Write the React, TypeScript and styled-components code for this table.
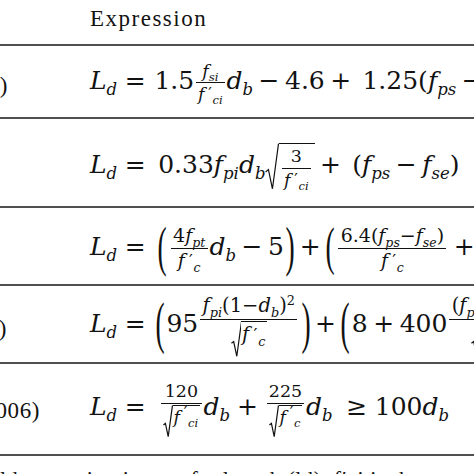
import styled, { createGlobalStyle } from 'styled-components'
import type { ReactNode } from 'react'

const GlobalStyle = createGlobalStyle`
  html, body { margin: 0; padding: 0; background: #fff; }
  body { overflow: hidden; }
`

const Page = styled.div`
  width: 474px;
  height: 474px;
  overflow: hidden;
  background: #fff;
  color: #121212;
  font-family: "Liberation Serif", "DejaVu Serif", serif;
`

const Table = styled.div`
  display: flex;
  flex-direction: column;
  width: 900px;
`

const Row = styled.div<{ $h: number }>`
  display: flex;
  flex: none;
  height: ${p => p.$h}px;
  box-sizing: border-box;
  border-bottom: 2px solid #505050;
`

const Source = styled.div<{ $end?: number; $dy?: number }>`
  width: 90px;
  flex: none;
  display: flex;
  justify-content: flex-end;
  align-items: center;
  overflow: hidden;
  white-space: nowrap;
  box-sizing: border-box;
  padding-right: ${p => 90 - (p.$end ?? 0)}px;
  padding-top: ${p => p.$dy ?? 0}px;
  font-size: 23px;
  letter-spacing: 0.6px;
`

const Head = styled.div`
  padding-top: 6px;
  font-size: 23px;
  letter-spacing: 1.5px;
`

const Expr = styled.div<{ $dy?: number }>`
  flex: 1;
  display: flex;
  align-items: center;
  padding-top: ${p => p.$dy ?? 0}px;
  font-family: "DejaVu Serif", serif;
  font-size: 25px;
  white-space: nowrap;
`

const Line = styled.span`
  display: inline-block;
  line-height: 1.2;
`

const It = styled.span`
  font-style: italic;
`

const Sub = styled.span`
  font-size: 0.66em;
  font-style: italic;
  vertical-align: -0.36em;
  line-height: 0;
`

const Sup = styled.span`
  font-size: 0.66em;
  font-style: normal;
  vertical-align: 0.55em;
  line-height: 0;
`

const PrimeMark = styled.span<{ $high?: boolean }>`
  font-style: normal;
  font-size: 0.9em;
  vertical-align: ${p => (p.$high ? 0.3 : 0.06)}em;
  line-height: 0;
  margin: 0 0.04em 0 0.24em;
`

const Op = styled.span<{ $l?: number; $r?: number }>`
  margin: 0 ${p => p.$r ?? 0.22}em 0 ${p => p.$l ?? 0.22}em;
  font-style: normal;
`

const FracBox = styled.span<{ $size: number }>`
  display: inline-flex;
  flex-direction: column;
  align-items: stretch;
  vertical-align: middle;
  font-size: ${p => p.$size}em;
  line-height: 1.15;
  margin: 0 0.1em;
`

const Num = styled.span`
  display: block;
  text-align: center;
  padding: 0 0.12em 0.06em;
  border-bottom: 1px solid currentColor;
`

const Den = styled.span`
  display: block;
  text-align: center;
  padding: 0.06em 0.12em 0;
`

const SqrtBox = styled.span`
  display: inline-flex;
  align-items: stretch;
  vertical-align: middle;
`

const RadicalWrap = styled.span`
  display: flex;
  flex: none;
  width: 0.55em;
`

const RadicalSvg = styled.svg`
  display: block;
  width: 100%;
  height: 100%;
`

const Radicand = styled.span`
  display: inline-block;
  border-top: 1px solid currentColor;
  padding: 0.08em 0.08em 0 0.04em;
`

const Delim = styled.span<{ $k: number }>`
  display: inline-block;
  font-family: "Liberation Serif", serif;
  font-style: normal;
  transform: scale(1.1, ${p => p.$k});
  margin: 0 0.1em;
`

const Note = styled.div`
  padding-top: 10px;
  font-size: 22px;
  line-height: 26px;
  letter-spacing: 0.6px;
  white-space: nowrap;
`

const Sym = ({ b, s, prime, high, sup }: { b: string; s?: string; prime?: boolean; high?: boolean; sup?: string }) => (
  <It>
    {b}
    {prime && <PrimeMark $high={high}>′</PrimeMark>}
    {s && <Sub>{s}</Sub>}
    {sup && <Sup>{sup}</Sup>}
  </It>
)

const Frac = ({ num, den, size = 0.7 }: { num: ReactNode; den: ReactNode; size?: number }) => (
  <FracBox $size={size}>
    <Num>{num}</Num>
    <Den>{den}</Den>
  </FracBox>
)

const Sqrt = ({ children }: { children: ReactNode }) => (
  <SqrtBox>
    <RadicalWrap>
      <RadicalSvg viewBox="0 0 12 40" preserveAspectRatio="none">
        <path
          d="M0.5 25 L3 23 L6.5 39.5 L11.8 0.5"
          fill="none"
          stroke="currentColor"
          strokeWidth="1.2"
          vectorEffect="non-scaling-stroke"
        />
      </RadicalSvg>
    </RadicalWrap>
    <Radicand>{children}</Radicand>
  </SqrtBox>
)

const Ld = ({ gap = 0.5 }: { gap?: number }) => (
  <>
    <Sym b="L" s="d" />
    <Op $l={0.3} $r={gap}>=</Op>
  </>
)

export default function App() {
  return (
    <Page>
      <GlobalStyle />
      <Table>
        <Row $h={46}>
          <Source />
          <Head>Expression</Head>
        </Row>

        <Row $h={73}>
          <Source $end={8} $dy={8}>Zia and Mostafa (1977)</Source>
          <Expr $dy={2}>
            <Line>
              <Ld gap={0.35} />
              1.5
              <Frac num={<Sym b="f" s="si" />} den={<Sym b="f" prime s="ci" />} />
              <Sym b="d" s="b" />
              <Op>−</Op>4.6<Op $r={0.45}>+</Op>
              1.25(<Sym b="f" s="ps" />
              <Op>−</Op>
              <Sym b="f" s="se" />)<Sym b="d" s="b" />
            </Line>
          </Expr>
        </Row>

        <Row $h={89}>
          <Source />
          <Expr $dy={8}>
            <Line>
              <Ld />
              0.33<Sym b="f" s="pi" />
              <Sym b="d" s="b" />
              <Sqrt>
                <Frac num="3" den={<Sym b="f" prime s="ci" />} />
              </Sqrt>
              <Op $r={0.45}>+</Op>(<Sym b="f" s="ps" />
              <Op>−</Op>
              <Sym b="f" s="se" />)
            </Line>
          </Expr>
        </Row>

        <Row $h={78}>
          <Source />
          <Expr $dy={4}>
            <Line>
              <Ld gap={0.4} />
              <Delim $k={2.2}>(</Delim>
              <Frac
                size={0.76}
                num={
                  <>
                    4<Sym b="f" s="pt" />
                  </>
                }
                den={<Sym b="f" prime s="c" />}
              />
              <Sym b="d" s="b" />
              <Op>−</Op>5<Delim $k={2.2}>)</Delim>
              <Op $l={0.1} $r={0.1}>+</Op>
              <Delim $k={2.1}>(</Delim>
              <Frac
                size={0.76}
                num={
                  <>
                    6.4(<Sym b="f" s="ps" />−<Sym b="f" s="se" />)
                  </>
                }
                den={<Sym b="f" prime s="c" />}
              />
              <Op>+</Op>50<Delim $k={2.1}>)</Delim>
            </Line>
          </Expr>
        </Row>

        <Row $h={78}>
          <Source $end={7} $dy={10}>Mahmoud et al. (1999)</Source>
          <Expr $dy={4}>
            <Line>
              <Ld gap={0.3} />
              <Delim $k={2.3}>(</Delim>95
              <Frac
                size={0.78}
                num={
                  <>
                    <Sym b="f" s="pi" />
                    (1−<Sym b="d" s="b" />)<Sup>2</Sup>
                  </>
                }
                den={
                  <Sqrt>
                    <Sym b="f" prime s="c" />
                  </Sqrt>
                }
              />
              <Delim $k={2.3}>)</Delim>
              <Op $l={0.1} $r={0.1}>+</Op>
              <Delim $k={2.3}>(</Delim>8<Op>+</Op>400
              <Frac
                size={0.78}
                num={
                  <>
                    (<Sym b="f" s="ps" />−<Sym b="f" s="se" />)
                  </>
                }
                den={
                  <Sqrt>
                    <Sym b="f" prime s="c" />
                  </Sqrt>
                }
              />
              <Delim $k={2.3}>)</Delim>
            </Line>
          </Expr>
        </Row>

        <Row $h={92}>
          <Source $end={40} $dy={4}>ACI 318 (2006)</Source>
          <Expr $dy={-4}>
            <Line>
              <Ld gap={0.55} />
              <Frac
                num="120"
                den={
                  <Sqrt>
                    <Sym b="f" prime high s="ci" />
                  </Sqrt>
                }
              />
              <Sym b="d" s="b" />
              <Op $l={0.28} $r={0.28}>+</Op>
              <Frac
                num="225"
                den={
                  <Sqrt>
                    <Sym b="f" prime high s="c" />
                  </Sqrt>
                }
              />
              <Sym b="d" s="b" />
              <Op $l={0.55} $r={0.3}>≥</Op>100<Sym b="d" s="b" />
            </Line>
          </Expr>
        </Row>

        <Note>ld to tension is transfer length (ld), f′ci is the concrete strength</Note>
      </Table>
    </Page>
  )
}
